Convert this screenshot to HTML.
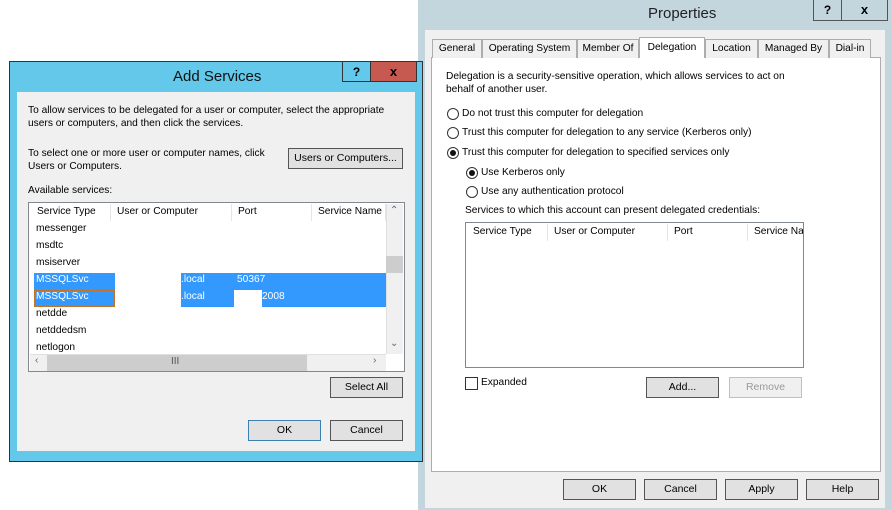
<!DOCTYPE html>
<html><head><style>
*{box-sizing:border-box;margin:0;padding:0}
body{width:892px;height:510px;background:#fff;position:relative;overflow:hidden;font-family:"Liberation Sans",sans-serif;font-size:10.2px;color:#000}
.a{position:absolute}
.btn{position:absolute;border:1px solid #adadad;background:#e1e1e1;text-align:center;line-height:19px;font-size:10.5px}
.t{position:absolute;white-space:nowrap}
.rad{position:absolute;width:12px;height:12px;border:1px solid #333;border-radius:50%;background:#fff}
.rad.on::after{content:"";position:absolute;left:2px;top:2px;width:6px;height:6px;border-radius:50%;background:#111}
.hd{position:absolute;top:0;height:17px;border-right:1px solid #e5e5e5;line-height:16px;padding-left:6px;background:#fff;white-space:nowrap;overflow:hidden}
.tab{position:absolute;top:39px;height:19px;border:1px solid #adadad;border-bottom:none;background:#f0f0f0;line-height:18px;text-align:center;white-space:nowrap}
</style></head><body>
<!-- Properties window -->
<div class="a" style="left:418px;top:0;width:474px;height:510px;background:#c3d6de"></div>
<div class="t" style="left:648px;top:5px;font-size:15px;color:#222">Properties</div>
<div class="a" style="left:813px;top:0;width:29px;height:21px;border:1px solid #555;border-top:none;background:#c3d6de;text-align:center;font-weight:bold;font-size:12px;line-height:20px">?</div>
<div class="a" style="left:841px;top:0;width:47px;height:21px;border:1px solid #555;border-top:none;background:#c3d6de;text-align:center;font-weight:bold;font-size:13px;line-height:20px">x</div>
<div class="a" style="left:425px;top:30px;width:460px;height:478px;background:#f0f0f0"></div>
<div class="a" style="left:431px;top:57px;width:450px;height:415px;background:#fff;border:1px solid #adadad"></div>
<div class="tab" style="left:432px;width:50px">General</div>
<div class="tab" style="left:482px;width:95px">Operating System</div>
<div class="tab" style="left:577px;width:62px">Member Of</div>
<div class="tab" style="left:639px;top:37px;width:66px;height:21px;background:#fff;line-height:19px">Delegation</div>
<div class="tab" style="left:705px;width:53px">Location</div>
<div class="tab" style="left:758px;width:71px">Managed By</div>
<div class="tab" style="left:829px;width:42px">Dial-in</div>
<div class="t" style="left:446px;top:70px;line-height:13px">Delegation is a security-sensitive operation, which allows services to act on<br>behalf of another user.</div>
<div class="rad" style="left:447px;top:108px"></div><div class="t" style="left:462px;top:108px">Do not trust this computer for delegation</div>
<div class="rad" style="left:447px;top:127px"></div><div class="t" style="left:462px;top:127px">Trust this computer for delegation to any service (Kerberos only)</div>
<div class="rad on" style="left:447px;top:147px"></div><div class="t" style="left:462px;top:147px">Trust this computer for delegation to specified services only</div>
<div class="rad on" style="left:466px;top:167px"></div><div class="t" style="left:481px;top:167px">Use Kerberos only</div>
<div class="rad" style="left:466px;top:186px"></div><div class="t" style="left:481px;top:186px">Use any authentication protocol</div>
<div class="t" style="left:465px;top:205px">Services to which this account can present delegated credentials:</div>
<div class="a" style="left:465px;top:222px;width:339px;height:146px;border:1px solid #828790;background:#fff;overflow:hidden">
<div class="hd" style="left:1px;width:81px;top:1px">Service Type</div>
<div class="hd" style="left:82px;width:120px;top:1px">User or Computer</div>
<div class="hd" style="left:202px;width:80px;top:1px">Port</div>
<div class="hd" style="left:282px;width:80px;top:1px">Service Name</div>
</div>
<div class="a" style="left:465px;top:377px;width:13px;height:13px;border:1px solid #333;background:#fff"></div>
<div class="t" style="left:481px;top:377px">Expanded</div>
<div class="btn" style="left:646px;top:377px;width:73px;height:21px;border-color:#555">Add...</div>
<div class="btn" style="left:729px;top:377px;width:73px;height:21px;border-color:#bfbfbf;background:#f0f0f0;color:#999">Remove</div>
<div class="btn" style="left:563px;top:479px;width:73px;height:21px;border-color:#555">OK</div>
<div class="btn" style="left:644px;top:479px;width:73px;height:21px;border-color:#555">Cancel</div>
<div class="btn" style="left:725px;top:479px;width:73px;height:21px;border-color:#555">Apply</div>
<div class="btn" style="left:806px;top:479px;width:73px;height:21px;border-color:#555">Help</div>

<!-- Add Services -->
<div class="a" style="left:9px;top:61px;width:414px;height:401px;background:#63c8ea;border:1px solid #333"></div>
<div class="t" style="left:173px;top:68px;font-size:15px;color:#111">Add Services</div>
<div class="a" style="left:342px;top:61px;width:29px;height:21px;border:1px solid #333;background:#63c8ea;text-align:center;font-weight:bold;font-size:12px;line-height:20px">?</div>
<div class="a" style="left:370px;top:61px;width:47px;height:21px;border:1px solid #333;background:#c75a50;text-align:center;font-weight:bold;font-size:13px;line-height:20px">x</div>
<div class="a" style="left:17px;top:92px;width:398px;height:359px;background:#f0f0f0"></div>
<div class="t" style="left:28px;top:104px;line-height:13px">To allow services to be delegated for a user or computer, select the appropriate<br>users or computers, and then click the services.</div>
<div class="t" style="left:28px;top:147px;line-height:13px">To select one or more user or computer names, click<br>Users or Computers.</div>
<div class="btn" style="left:288px;top:148px;width:115px;height:21px;border-color:#555">Users or Computers...</div>
<div class="t" style="left:28px;top:185px">Available services:</div>
<div class="a" style="left:28px;top:202px;width:377px;height:170px;border:1px solid #828790;background:#fff;overflow:hidden">
<div class="hd" style="left:2px;width:80px;top:1px">Service Type</div>
<div class="hd" style="left:82px;width:121px;top:1px">User or Computer</div>
<div class="hd" style="left:203px;width:80px;top:1px">Port</div>
<div class="hd" style="left:283px;width:74px;top:1px">Service Name</div>
<div class="t" style="left:7px;top:20px">messenger</div>
<div class="t" style="left:7px;top:37px">msdtc</div>
<div class="t" style="left:7px;top:54px">msiserver</div>
<div class="a" style="left:5px;top:70px;width:81px;height:17px;background:#3399ff"></div>
<div class="a" style="left:152px;top:70px;width:205px;height:17px;background:#3399ff"></div>
<div class="a" style="left:5px;top:87px;width:81px;height:17px;background:#3399ff;border:1px dotted #c07020"></div>
<div class="a" style="left:152px;top:87px;width:205px;height:17px;background:#3399ff;border-bottom:1px dotted #c07020"></div>
<div class="a" style="left:205px;top:87px;width:28px;height:17px;background:#fff"></div>
<div class="t" style="left:7px;top:71px;color:#fff">MSSQLSvc</div>
<div class="t" style="left:152px;top:71px;color:#fff">.local</div>
<div class="t" style="left:208px;top:71px;color:#fff">50367</div>
<div class="t" style="left:7px;top:88px;color:#fff">MSSQLSvc</div>
<div class="t" style="left:152px;top:88px;color:#fff">.local</div>
<div class="t" style="left:233px;top:88px;color:#fff">2008</div>
<div class="t" style="left:7px;top:105px">netdde</div>
<div class="t" style="left:7px;top:122px">netddedsm</div>
<div class="t" style="left:7px;top:139px">netlogon</div>
<div class="a" style="left:357px;top:1px;width:17px;height:150px;background:#f0f0f0;border-left:1px solid #e0e0e0"></div>
<div class="a" style="left:357px;top:53px;width:17px;height:17px;background:#cdcdcd"></div>
<div class="t" style="left:361px;top:2px;color:#666;font-size:10px">&#8963;</div>
<div class="t" style="left:361px;top:135px;color:#666;font-size:10px">&#8964;</div>
<div class="a" style="left:1px;top:151px;width:356px;height:17px;background:#f0f0f0;border-top:1px solid #e0e0e0"></div>
<div class="a" style="left:18px;top:152px;width:260px;height:16px;background:#cdcdcd"></div>
<div class="t" style="left:142px;top:153px;color:#555;font-size:10px">III</div>
<div class="t" style="left:6px;top:152px;color:#666">&lsaquo;</div>
<div class="t" style="left:344px;top:152px;color:#666">&rsaquo;</div>
</div>
<div class="btn" style="left:330px;top:377px;width:73px;height:21px;border-color:#555">Select All</div>
<div class="btn" style="left:248px;top:420px;width:73px;height:21px;border-color:#3c7fb1">OK</div>
<div class="btn" style="left:330px;top:420px;width:73px;height:21px;border-color:#555">Cancel</div>
</body></html>
